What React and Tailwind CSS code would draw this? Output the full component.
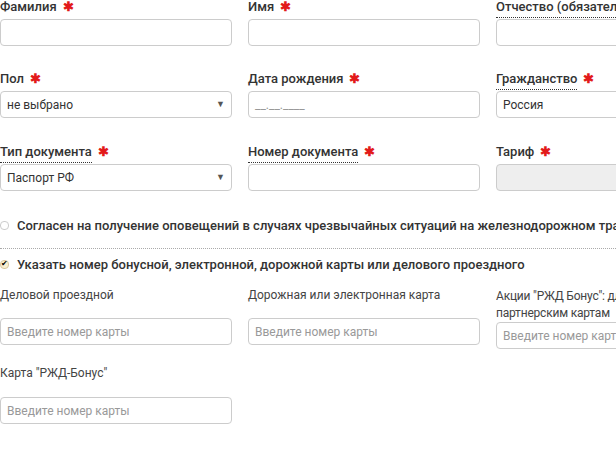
const Star = () => <span className="ml-1.5 text-[13px] font-bold leading-none text-[#e21a1a]">✱</span>;

function Label({ text, req, dotted }) {
  return (
    <div className="h-[19px] text-[13px] font-medium text-[#333] leading-[13px] whitespace-nowrap">
      <span className={dotted ? "border-b border-dotted border-[#333] pb-[3px]" : ""}>{text}</span>
      {req && <Star />}
    </div>
  );
}

function Input({ value, placeholder, select, disabled }) {
  return (
    <div className={`relative flex h-[27px] w-[232px] items-center rounded border border-[#ccc] px-[6px] text-[12px] ${disabled ? "bg-[#eee]" : "bg-white"}`}>
      {value && <span className="text-[#333]">{value}</span>}
      {placeholder && <span className="text-[#999]">{placeholder}</span>}
      {select && <span className="absolute right-[6px] text-[9px] text-[#555]">▼</span>}
    </div>
  );
}

function Field({ label, req, dotted, ...rest }) {
  return (
    <div className="w-[232px] shrink-0">
      <Label text={label} req={req} dotted={dotted} />
      <Input {...rest} />
    </div>
  );
}

export default function App() {
  return (
    <div className="w-[616px] h-[473px] overflow-hidden bg-white" style={{ fontFamily: "Roboto, 'Liberation Sans', sans-serif" }}>
      <div className="w-[760px]">
        <div className="flex gap-4">
          <Field label="Фамилия" req />
          <Field label="Имя" req />
          <Field label="Отчество (обязательно при наличии)" dotted />
        </div>
        <div className="mt-[26px] flex gap-4">
          <Field label="Пол" req value="не выбрано" select />
          <Field label="Дата рождения" req placeholder="__.__.____" />
          <Field label="Гражданство" req dotted value="Россия" />
        </div>
        <div className="mt-[27px] flex gap-4">
          <Field label="Тип документа" req dotted value="Паспорт РФ" select />
          <Field label="Номер документа" req dotted />
          <Field label="Тариф" req disabled />
        </div>
        <div className="mt-[25px] flex items-center gap-2 text-[13px] font-medium text-[#333] whitespace-nowrap">
          <span className="h-[9px] w-[9px] rounded-sm border border-[#ccc]" />
          Согласен на получение оповещений в случаях чрезвычайных ситуаций на железнодорожном транспорте
        </div>
        <div className="mt-[12px] border-t border-dotted border-[#aaa]" />
        <div className="mt-[6px] flex items-center gap-2 text-[13px] font-medium text-[#333] whitespace-nowrap">
          <span className="flex h-[9px] w-[9px] items-center justify-center rounded-sm border border-[#d8c8a0] bg-[#fbf0d0] text-[8px] leading-none text-black">✔</span>
          Указать номер бонусной, электронной, дорожной карты или делового проездного
        </div>
        <div className="mt-[14px] flex gap-4 text-[12px] text-[#444]">
          <div className="w-[232px]">
            <div className="h-[30px] leading-[14px]">Деловой проездной</div>
            <Input placeholder="Введите номер карты" />
          </div>
          <div className="w-[232px]">
            <div className="h-[30px] leading-[14px]">Дорожная или электронная карта</div>
            <Input placeholder="Введите номер карты" />
          </div>
          <div className="w-[232px]">
            <div className="h-[34px] leading-[17px] tracking-[-0.2px]">Акции "РЖД Бонус": для студентов, по партнерским картам</div>
            <Input placeholder="Введите номер карты" />
          </div>
        </div>
        <div className="mt-[17px] text-[12px] text-[#444]">
          <div className="h-[31px] leading-[14px]">Карта "РЖД-Бонус"</div>
          <Input placeholder="Введите номер карты" />
        </div>
      </div>
    </div>
  );
}
